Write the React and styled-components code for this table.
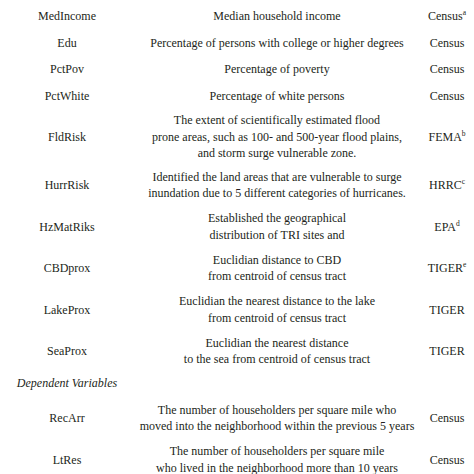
import React from 'react';
import styled, { createGlobalStyle } from 'styled-components';

const GlobalStyle = createGlobalStyle`
  html, body {
    margin: 0;
    padding: 0;
    background: #fff;
  }
`;

const Page = styled.div`
  width: 474px;
  height: 474px;
  overflow: hidden;
  padding-top: 3px;
  box-sizing: border-box;
  font-family: "Liberation Serif", "Times New Roman", serif;
  font-size: 12px;
  color: #231f20;
`;

const Table = styled.table`
  width: 474px;
  border-collapse: collapse;
  table-layout: fixed;
`;

const Cell = styled.td`
  padding: ${p => (p.$lines === 1 ? 5 : p.$lines === 3 ? 3 : 4.25)}px 0;
  line-height: 16.5px;
  text-align: center;
  vertical-align: middle;
  width: ${p => p.$width}px;
`;

const Section = styled.td`
  padding: 3px 0 6px;
  line-height: 16.5px;
  text-align: center;
  font-style: italic;
`;

const Sup = styled.sup`
  font-size: 7.5px;
  line-height: 0;
  vertical-align: 5px;
`;

const rows = [
  { name: 'MedIncome', desc: ['Median household income'], src: 'Census', note: 'a' },
  { name: 'Edu', desc: ['Percentage of persons with college or higher degrees'], src: 'Census' },
  { name: 'PctPov', desc: ['Percentage of poverty'], src: 'Census' },
  { name: 'PctWhite', desc: ['Percentage of white persons'], src: 'Census' },
  {
    name: 'FldRisk',
    desc: [
      'The extent of scientifically estimated flood',
      'prone areas, such as 100- and 500-year flood plains,',
      'and storm surge vulnerable zone.',
    ],
    src: 'FEMA',
    note: 'b',
  },
  {
    name: 'HurrRisk',
    desc: [
      'Identified the land areas that are vulnerable to surge',
      'inundation due to 5 different categories of hurricanes.',
    ],
    src: 'HRRC',
    note: 'c',
  },
  {
    name: 'HzMatRiks',
    desc: ['Established the geographical', 'distribution of TRI sites and'],
    src: 'EPA',
    note: 'd',
  },
  {
    name: 'CBDprox',
    desc: ['Euclidian distance to CBD', 'from centroid of census tract'],
    src: 'TIGER',
    note: 'e',
  },
  {
    name: 'LakeProx',
    desc: ['Euclidian the nearest distance to the lake', 'from centroid of census tract'],
    src: 'TIGER',
  },
  {
    name: 'SeaProx',
    desc: ['Euclidian the nearest distance', 'to the sea from centroid of census tract'],
    src: 'TIGER',
  },
  { section: 'Dependent Variables' },
  {
    name: 'RecArr',
    desc: [
      'The number of householders per square mile who',
      'moved into the neighborhood within the previous 5 years',
    ],
    src: 'Census',
  },
  {
    name: 'LtRes',
    desc: [
      'The number of householders per square mile',
      'who lived in the neighborhood more than 10 years',
    ],
    src: 'Census',
  },
];

export default function App() {
  return (
    <Page>
      <GlobalStyle />
      <Table>
        <tbody>
          {rows.map((row, i) =>
            row.section ? (
              <tr key={i}>
                <Section>{row.section}</Section>
                <td />
                <td />
              </tr>
            ) : (
              <tr key={i}>
                <Cell $width={134} $lines={row.desc.length}>{row.name}</Cell>
                <Cell $width={286} $lines={row.desc.length}>
                  {row.desc.map((line, j) => (
                    <React.Fragment key={j}>
                      {j > 0 && <br />}
                      {line}
                    </React.Fragment>
                  ))}
                </Cell>
                <Cell $width={54} $lines={row.desc.length}>
                  {row.src}
                  {row.note && <Sup>{row.note}</Sup>}
                </Cell>
              </tr>
            )
          )}
        </tbody>
      </Table>
    </Page>
  );
}
